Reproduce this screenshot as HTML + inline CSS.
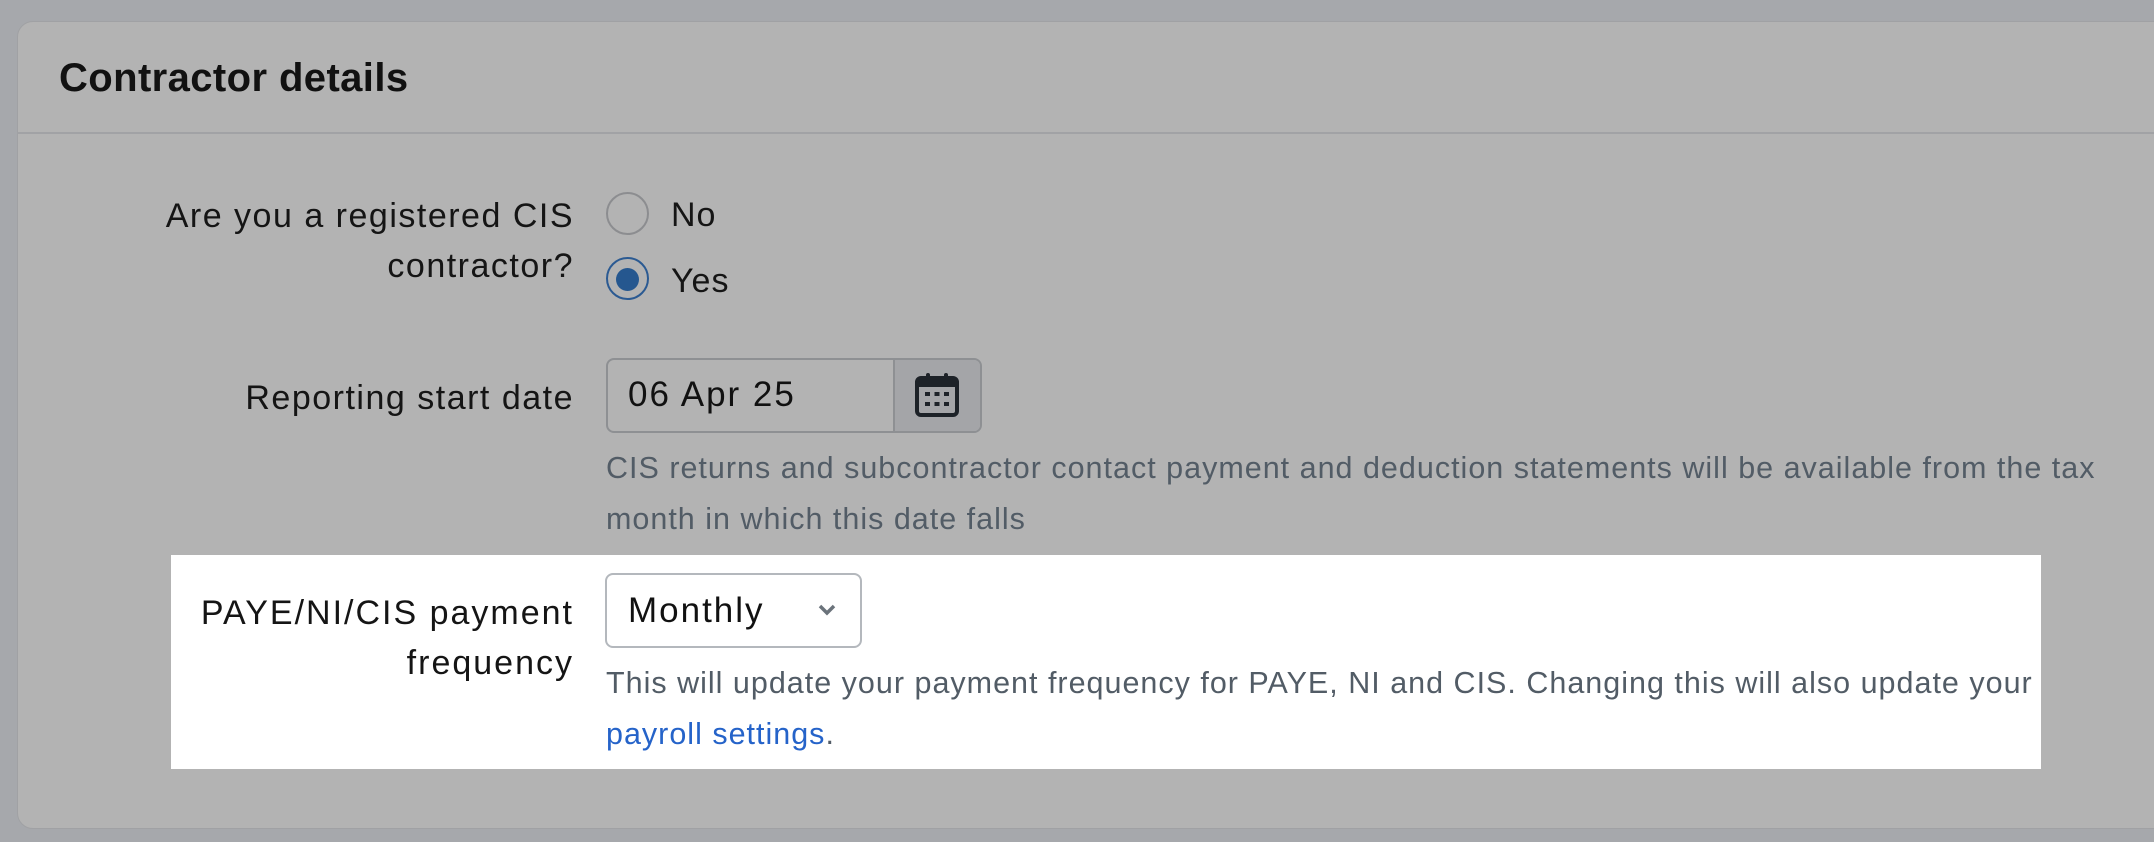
<!DOCTYPE html>
<html><head><style>
html,body{margin:0;padding:0}
body{width:2154px;height:842px;background:#a6a8ac;position:relative;overflow:hidden;font-family:"Liberation Sans",sans-serif;}
.card{position:absolute;left:17px;top:21px;width:2160px;height:806px;background:#b3b3b3;border:1px solid #a0a1a4;border-radius:16px;}
.hline{position:absolute;left:18px;top:132px;width:2140px;height:2px;background:#a1a2a5}
.t{position:absolute;white-space:nowrap}
.title{left:59px;top:56px;font-size:40px;font-weight:bold;color:#111;letter-spacing:0.4px}
.lbl{font-size:34px;color:#151515;text-align:right;right:1580px;line-height:50px;letter-spacing:1.5px}
.radio{position:absolute;width:39px;height:39px;border-radius:50%;border:2px solid #8c8d90;box-sizing:content-box}
.help{font-size:30.5px;color:#525c66;line-height:51px;letter-spacing:1px}
.white{position:absolute;left:171px;top:555px;width:1870px;height:214px;background:#fff}
</style></head><body>
<div class="card"></div>
<div class="hline"></div>
<div class="t title">Contractor details</div>

<div class="t lbl" style="top:191px">Are you a registered CIS<br>contractor?</div>
<div class="radio" style="left:606px;top:192px"></div>
<div class="t" style="left:671px;top:196px;font-size:34px;color:#151515;letter-spacing:1px">No</div>
<div class="radio" style="left:606px;top:257px;border-color:#2b5a92"></div>
<div style="position:absolute;left:616px;top:268px;width:23px;height:23px;border-radius:50%;background:#25578f"></div>
<div class="t" style="left:671px;top:262px;font-size:34px;color:#151515;letter-spacing:1px">Yes</div>

<div class="t lbl" style="top:373px">Reporting start date</div>
<div style="position:absolute;left:606px;top:358px;width:372px;height:71px;border:2px solid #8e9093;border-radius:8px;overflow:hidden;">
  <div style="position:absolute;left:285px;top:0;width:87px;height:71px;background:#a4a5a8;border-left:2px solid #8e9093"></div>
</div>
<div class="t" style="left:628px;top:375px;font-size:35px;color:#111;letter-spacing:2px">06 Apr 25</div>
<svg style="position:absolute;left:914px;top:372px" width="46" height="46" viewBox="0 0 46 46">
  <rect x="3" y="6" width="40" height="37" rx="4" fill="none" stroke="#1d2228" stroke-width="4"/>
  <rect x="3" y="6" width="40" height="9" fill="#1d2228"/>
  <rect x="12" y="1" width="4" height="9" rx="2" fill="#1d2228"/>
  <rect x="30" y="1" width="4" height="9" rx="2" fill="#1d2228"/>
  <g fill="#1d2228"><rect x="11" y="20" width="5" height="4"/><rect x="20.5" y="20" width="5" height="4"/><rect x="30" y="20" width="5" height="4"/>
  <rect x="11" y="30" width="5" height="4"/><rect x="20.5" y="30" width="5" height="4"/><rect x="30" y="30" width="5" height="4"/></g>
</svg>
<div class="t help" style="left:606px;top:443px">CIS returns and subcontractor contact payment and deduction statements will be available from the tax<br>month in which this date falls</div>

<div class="white"></div>
<div class="t lbl" style="top:588px;letter-spacing:2px">PAYE/NI/CIS payment<br>frequency</div>
<div style="position:absolute;left:605px;top:573px;width:253px;height:71px;border:2px solid #b4b8bd;border-radius:8px;background:#fff"></div>
<div class="t" style="left:628px;top:591px;font-size:35px;color:#111;letter-spacing:2px">Monthly</div>
<svg style="position:absolute;left:818px;top:603px" width="18" height="14" viewBox="0 0 18 14"><path d="M2 3 L9 10 L16 3" fill="none" stroke="#6b737b" stroke-width="3.5"/></svg>
<div class="t help" style="left:606px;top:658px">This will update your payment frequency for PAYE, NI and CIS. Changing this will also update your<br><span style="color:#2563c9">payroll settings</span>.</div>
</body></html>
